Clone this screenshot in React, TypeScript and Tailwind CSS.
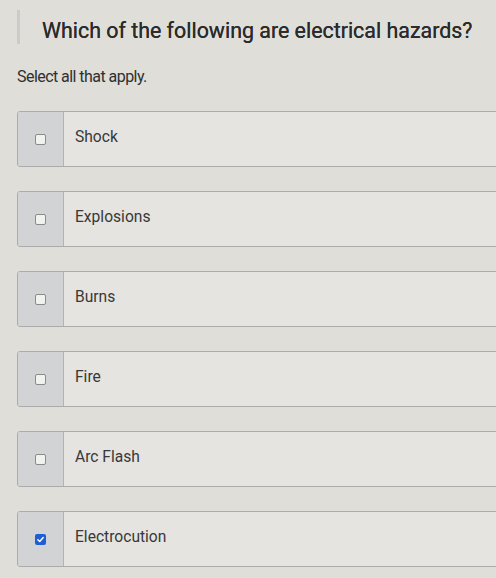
import React from "react";

const options = [
  { label: "Shock", checked: false },
  { label: "Explosions", checked: false },
  { label: "Burns", checked: false },
  { label: "Fire", checked: false },
  { label: "Arc Flash", checked: false },
  { label: "Electrocution", checked: true },
];

function Box({ checked }: { checked: boolean }) {
  if (checked) {
    return (
      <span className="flex h-[11px] w-[11px] items-center justify-center rounded-[2px] bg-[#1f5fd6]">
        <svg viewBox="0 0 12 12" className="h-[9px] w-[9px]">
          <path d="M2.5 6.3 L5 8.6 L9.6 3.4" fill="none" stroke="#fff" strokeWidth="2" strokeLinecap="round" strokeLinejoin="round" />
        </svg>
      </span>
    );
  }
  return <span className="block h-[11px] w-[11px] rounded-[2px] border-[1.5px] border-[#8a8a8a] bg-[#f1f1ef]" />;
}

export default function App() {
  return (
    <div className="h-[578px] w-[496px] overflow-hidden bg-[#dfded9] font-['Roboto',sans-serif] text-[#3a3a3a]">
      <div className="flex items-stretch pl-[17px] pt-[10px]">
        <div className="w-[3px] bg-[#cbcbc9]" />
        <h1 className="whitespace-nowrap pl-[22px] pt-[8px] text-[21.4px] leading-[26px] font-normal text-[#2b2b2b] [text-shadow:0_0_0.4px_#2b2b2b]">
          Which of the following are electrical hazards?
        </h1>
      </div>
      <p className="mt-[23px] pl-[17px] text-[16px] leading-[20px] tracking-[-0.55px] text-[#2f2f2f]">Select all that apply.</p>
      <div className="mt-[24px] flex flex-col gap-[24px] pl-[17px]">
        {options.map((o) => (
          <div
            key={o.label}
            className="-mr-[10px] flex h-[56px] overflow-hidden rounded-l-[3px] border border-[#acacaa] bg-[#e5e4e0]"
          >
            <div className="flex w-[46px] items-center justify-center border-r border-[#b3b3b1] bg-[#d2d3d5]">
              <Box checked={o.checked} />
            </div>
            <div className="flex items-start pl-[11px] pt-[15px] text-[15.6px] leading-[20px] text-[#383838]">
              {o.label}
            </div>
          </div>
        ))}
      </div>
    </div>
  );
}
